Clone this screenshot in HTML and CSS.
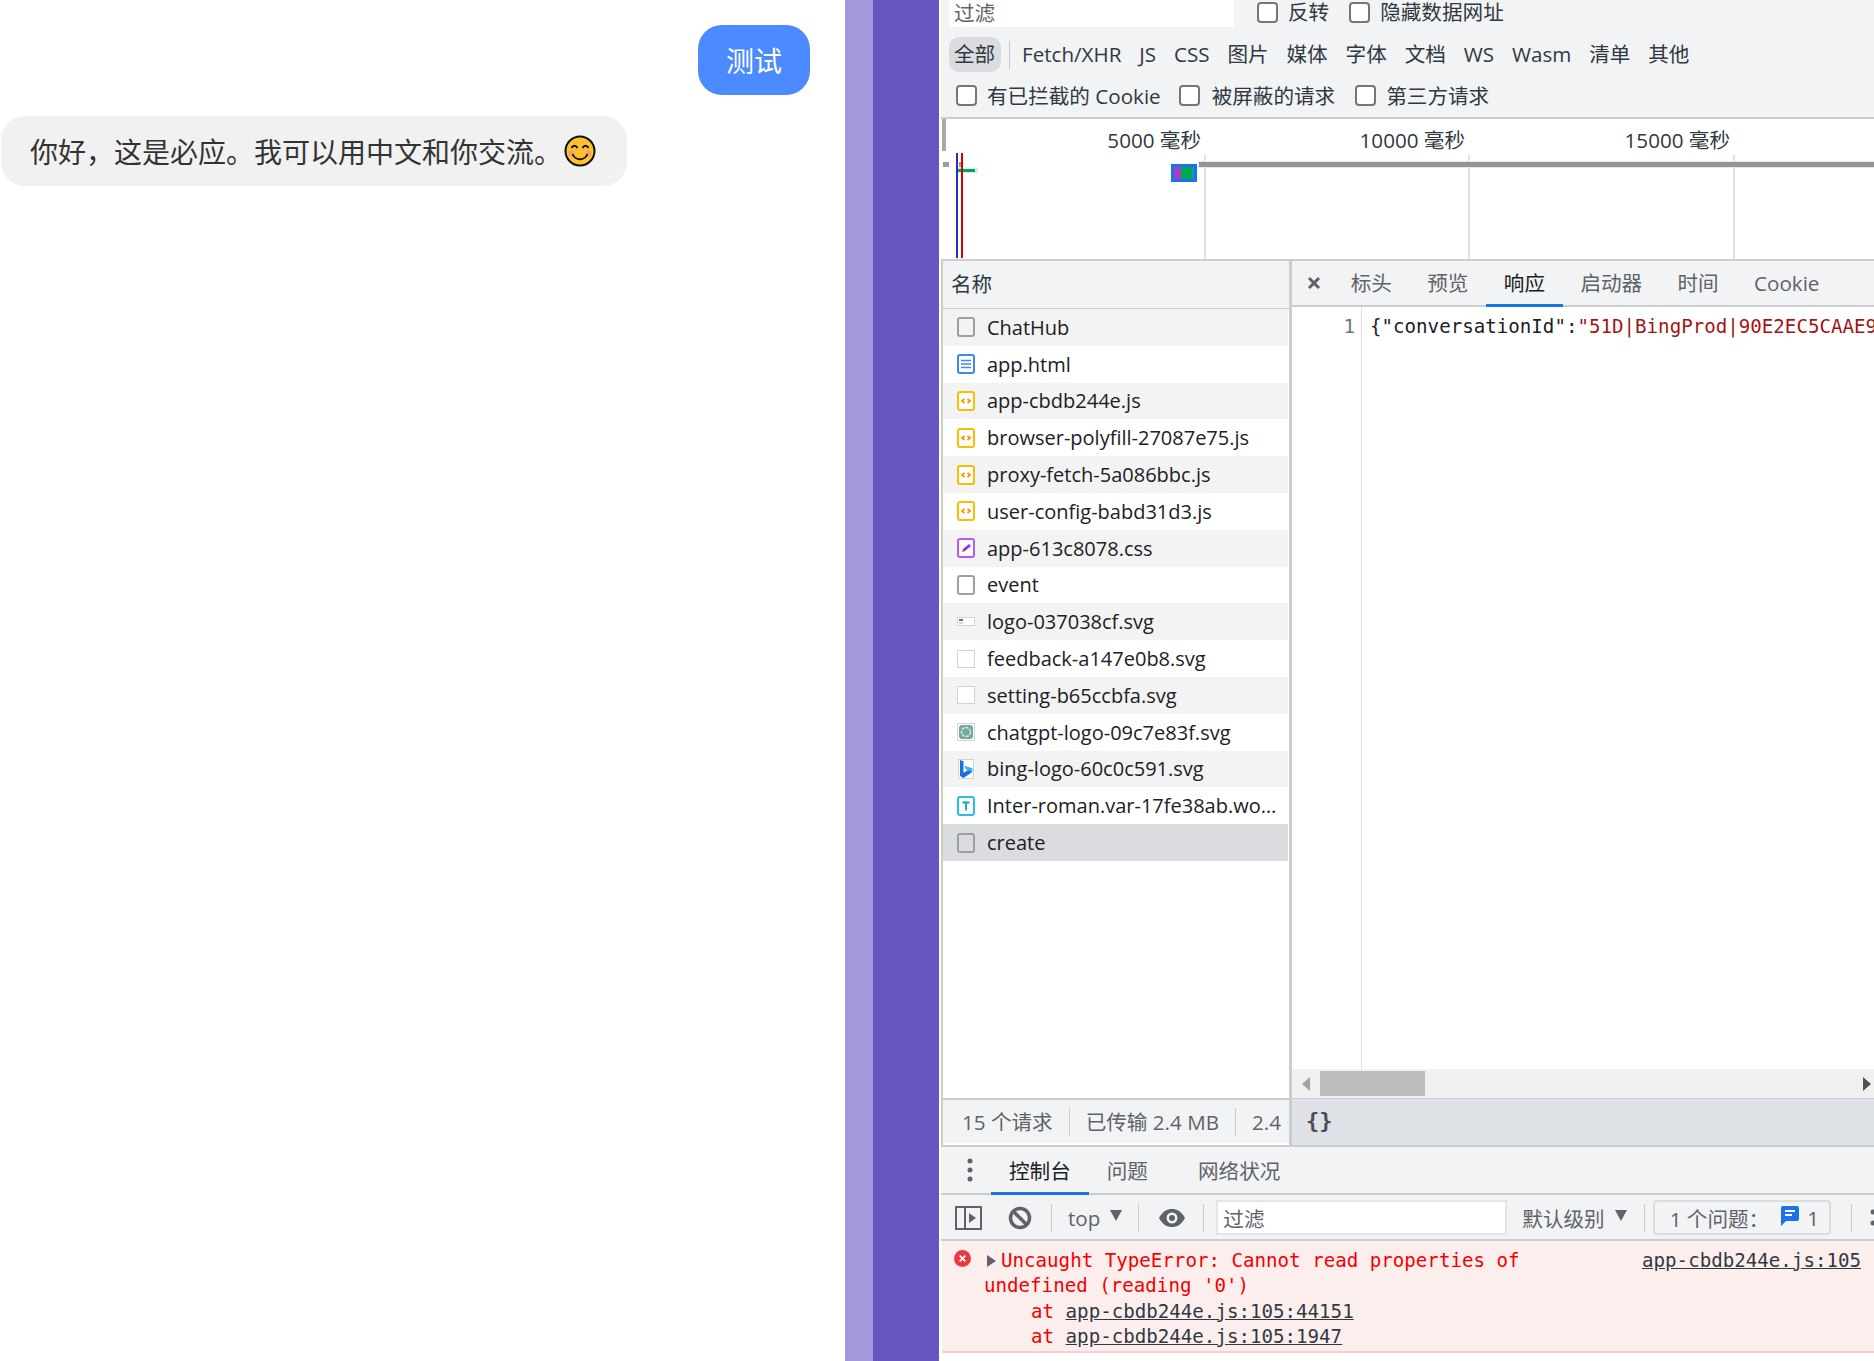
FILE: index.html
```html
<!DOCTYPE html>
<html lang="zh-CN">
<head>
<meta charset="utf-8">
<title>ChatHub DevTools</title>
<link rel="stylesheet" href="styles.css">
</head>
<body>
<svg class="defs" aria-hidden="true">
  <symbol id="i-doc" viewBox="0 0 18 20"><rect x="1" y="1" width="16" height="18" rx="2" fill="none" stroke="#9aa0a6" stroke-width="2"/></symbol>
  <symbol id="i-html" viewBox="0 0 18 20"><rect x="1" y="1" width="16" height="18" rx="2" fill="#fff" stroke="#4285f4" stroke-width="2"/><path d="M4 6.500h10M4 10h10M4 13.500h10" stroke="#4285f4" stroke-width="1.500"/></symbol>
  <symbol id="i-js" viewBox="0 0 18 20"><rect x="1" y="1" width="16" height="18" rx="2" fill="#fff" stroke="#fbbc04" stroke-width="2"/><path d="M7.500 8l-2.500 2 2.500 2M10.500 8l2.500 2-2.500 2" fill="none" stroke="#f29900" stroke-width="1.800"/></symbol>
  <symbol id="i-css" viewBox="0 0 18 20"><rect x="1" y="1" width="16" height="18" rx="2" fill="#fff" stroke="#af5cf7" stroke-width="2"/><path d="M5 14l1-3 6-5 2 2-6 5z" fill="#9334e6"/></symbol>
  <symbol id="i-font" viewBox="0 0 18 20"><rect x="1" y="1" width="16" height="18" rx="2" fill="#fff" stroke="#24c1e0" stroke-width="2"/><path d="M5.500 6.500h7M9 6.500v8" fill="none" stroke="#12a4c4" stroke-width="1.800"/></symbol>
  <symbol id="i-blank" viewBox="0 0 18 20"><rect x=".5" y="1.500" width="17" height="17" fill="#fff" stroke="#d0d3d8"/></symbol>
  <symbol id="i-logo" viewBox="0 0 18 20"><rect x=".5" y="5.500" width="17" height="8" fill="#fff" stroke="#d0d3d8"/><rect x="2" y="7" width="2" height="2" fill="#5c5fd6"/><rect x="4" y="7" width="2" height="2" fill="#5c5fd6"/><rect x="2" y="10" width="4" height="2" fill="#f5d77e"/></symbol>
  <symbol id="i-gpt" viewBox="0 0 18 20"><rect x=".5" y="1.500" width="17" height="17" fill="#fff" stroke="#d0d3d8"/><rect x="2" y="3" width="14" height="14" rx="3" fill="#74aa9c"/><circle cx="9" cy="10" r="4.500" fill="none" stroke="#d6e8e2" stroke-width="1.500" stroke-dasharray="3 1"/></symbol>
  <symbol id="i-bing" viewBox="0 0 18 20"><rect x="1.500" y=".5" width="15" height="19" fill="#fff" stroke="#d0d3d8"/><path d="M3 1l3.500 1.300v11.500l4.500-2.600-2-1-1.300-3.200 7.300 2.600v3.600L6.500 19 3 17z" fill="#1b6fe0"/><path d="M7.700 7l7.800 2.600v3.600L11 11.200 9 10.200z" fill="#37b6e8"/></symbol>
</svg>

<div class="screen">
  <main class="chat">
    <div class="bubble bubble-user">测试</div>
    <div class="bubble bubble-bot">你好，这是必应。我可以用中文和你交流。<svg class="emoji" viewBox="0 0 32 32"><circle cx="16" cy="16" r="14.500" fill="#fdc02f" stroke="#111" stroke-width="2"/><circle cx="7.500" cy="18.500" r="3" fill="#f2a06a"/><circle cx="24.500" cy="18.500" r="3" fill="#f2a06a"/><path d="M7.500 13c1.500-3 4.500-3 6 0M18.500 13c1.500-3 4.500-3 6 0" fill="none" stroke="#111" stroke-width="1.800"/><path d="M8.500 19c3 7 12 7 15 0" fill="none" stroke="#111" stroke-width="1.800"/></svg></div>
  </main>
  <div class="strip-light"></div>
  <div class="strip-dark"></div>

  <section class="devtools">
    <div class="bar filter-bar">
      <div class="filter-input">过滤</div>
      <label class="check"><span class="box"></span>反转</label>
      <label class="check"><span class="box"></span>隐藏数据网址</label>
    </div>
    <div class="bar type-bar">
      <span class="type type-on">全部</span>
      <span class="type-sep"></span>
      <span class="type">Fetch/XHR</span>
      <span class="type">JS</span>
      <span class="type">CSS</span>
      <span class="type">图片</span>
      <span class="type">媒体</span>
      <span class="type">字体</span>
      <span class="type">文档</span>
      <span class="type">WS</span>
      <span class="type">Wasm</span>
      <span class="type">清单</span>
      <span class="type">其他</span>
    </div>
    <div class="bar check-bar">
      <label class="check"><span class="box"></span>有已拦截的 Cookie</label>
      <label class="check"><span class="box"></span>被屏蔽的请求</label>
      <label class="check"><span class="box"></span>第三方请求</label>
    </div>

    <div class="overview">
      <div class="tick tick-1"><span>5000 毫秒</span></div>
      <div class="tick tick-2"><span>10000 毫秒</span></div>
      <div class="tick tick-3"><span>15000 毫秒</span></div>
      <i class="mark m-handle"></i>
      <i class="mark m-stub"></i>
      <i class="mark m-dot"></i>
      <i class="mark m-long"></i>
      <i class="mark m-halo"></i>
      <i class="mark m-green"></i>
      <i class="mark m-blue"></i>
      <i class="mark m-red"></i>
      <div class="mark m-req"><i class="req-p"></i><i class="req-g"></i><i class="req-t"></i></div>
    </div>

    <div class="split">
      <div class="names">
        <div class="names-head">名称</div>
        <ul class="rows">
          <li class="row"><svg class="ico"><use href="#i-doc"/></svg><span class="fname">ChatHub</span></li>
          <li class="row"><svg class="ico"><use href="#i-html"/></svg><span class="fname">app.html</span></li>
          <li class="row"><svg class="ico"><use href="#i-js"/></svg><span class="fname">app-cbdb244e.js</span></li>
          <li class="row"><svg class="ico"><use href="#i-js"/></svg><span class="fname">browser-polyfill-27087e75.js</span></li>
          <li class="row"><svg class="ico"><use href="#i-js"/></svg><span class="fname">proxy-fetch-5a086bbc.js</span></li>
          <li class="row"><svg class="ico"><use href="#i-js"/></svg><span class="fname">user-config-babd31d3.js</span></li>
          <li class="row"><svg class="ico"><use href="#i-css"/></svg><span class="fname">app-613c8078.css</span></li>
          <li class="row"><svg class="ico"><use href="#i-doc"/></svg><span class="fname">event</span></li>
          <li class="row"><svg class="ico"><use href="#i-logo"/></svg><span class="fname">logo-037038cf.svg</span></li>
          <li class="row"><svg class="ico"><use href="#i-blank"/></svg><span class="fname">feedback-a147e0b8.svg</span></li>
          <li class="row"><svg class="ico"><use href="#i-blank"/></svg><span class="fname">setting-b65ccbfa.svg</span></li>
          <li class="row"><svg class="ico"><use href="#i-gpt"/></svg><span class="fname">chatgpt-logo-09c7e83f.svg</span></li>
          <li class="row"><svg class="ico"><use href="#i-bing"/></svg><span class="fname">bing-logo-60c0c591.svg</span></li>
          <li class="row"><svg class="ico"><use href="#i-font"/></svg><span class="fname">Inter-roman.var-17fe38ab.woff2</span></li>
          <li class="row row-on"><svg class="ico"><use href="#i-doc"/></svg><span class="fname">create</span></li>
        </ul>
        <div class="names-foot">
          <span class="stat">15 个请求</span>
          <span class="stat">已传输 2.4 MB</span>
          <span class="stat">2.4</span>
        </div>
      </div>
      <div class="detail">
        <div class="detail-tabs">
          <svg class="close" viewBox="0 0 14 14"><path d="M2 2l10 10M12 2L2 12" stroke="#5f6368" stroke-width="3"/></svg>
          <span class="dtab">标头</span>
          <span class="dtab">预览</span>
          <span class="dtab dtab-on">响应</span>
          <span class="dtab">启动器</span>
          <span class="dtab">时间</span>
          <span class="dtab">Cookie</span>
        </div>
        <div class="code">
          <div class="gutter">1</div>
          <div class="code-line">{"conversationId":<span class="str">"51D|BingProd|90E2EC5CAAE9B1F4C7D2</span></div>
        </div>
        <div class="hscroll">
          <svg class="arrow arrow-l" viewBox="0 0 8 14"><path d="M8 0v14L0 7z" fill="#a3a3a3"/></svg>
          <div class="thumb"></div>
          <svg class="arrow arrow-r" viewBox="0 0 8 14"><path d="M0 0v14l8-7z" fill="#505050"/></svg>
        </div>
        <div class="detail-foot">{}</div>
      </div>
    </div>

    <div class="console-tabs">
      <svg class="dots" viewBox="0 0 6 24"><circle cx="3" cy="3" r="2.500"/><circle cx="3" cy="12" r="2.500"/><circle cx="3" cy="21" r="2.500"/></svg>
      <span class="ctab ctab-on">控制台</span>
      <span class="ctab ctab-issues">问题</span>
      <span class="ctab">网络状况</span>
    </div>

    <div class="console-bar">
      <svg class="tool tool-side" viewBox="0 0 27 24"><rect x="1" y="1" width="25" height="22" fill="none" stroke="#5f6368" stroke-width="2"/><path d="M10 1v22" stroke="#5f6368" stroke-width="2"/><path d="M14 7v10l7-5z" fill="#5f6368"/></svg>
      <svg class="tool tool-block" viewBox="0 0 24 24"><circle cx="12" cy="12" r="9.500" fill="none" stroke="#5f6368" stroke-width="3.500"/><path d="M5 5l14 14" stroke="#5f6368" stroke-width="3.500"/></svg>
      <span class="csep"></span>
      <span class="ctx">top</span><i class="caret caret-top"></i>
      <span class="csep"></span>
      <svg class="tool tool-eye" viewBox="0 0 28 20"><path d="M1 10C5 3 9 1 14 1s9 2 13 9c-4 7-8 9-13 9S5 17 1 10z" fill="#5f6368"/><circle cx="14" cy="10" r="5.500" fill="#f1f3f4"/><circle cx="14" cy="10" r="3" fill="#5f6368"/></svg>
      <span class="csep"></span>
      <div class="console-filter">过滤</div>
      <span class="levels">默认级别</span><i class="caret caret-lvl"></i>
      <span class="csep"></span>
      <div class="issues">
        <span>1 个问题：</span>
        <svg class="issue-ico" viewBox="0 0 18 20"><path d="M2 0h14a2 2 0 0 1 2 2v11a2 2 0 0 1-2 2H5l-5 5V2a2 2 0 0 1 2-2z" fill="#1a73e8"/><path d="M4 5h10M4 9h7" stroke="#fff" stroke-width="2"/></svg>
        <span class="issue-num">1</span>
      </div>
      <span class="csep"></span>
      <svg class="gear" viewBox="0 0 8 24"><circle cx="7" cy="6" r="2.500" fill="#5f6368"/><circle cx="7" cy="17" r="2.500" fill="#5f6368"/></svg>
    </div>

    <div class="error">
      <svg class="err-ico" viewBox="0 0 18 18"><circle cx="9" cy="9" r="9" fill="#eb3941"/><path d="M6 6l6 6M12 6l-6 6" stroke="#fff" stroke-width="1.800"/></svg>
      <a class="src">app-cbdb244e.js:105</a>
      <div class="msg"><i class="tri"></i>Uncaught TypeError: Cannot read properties of<br>undefined (reading '0')<br><span class="at">at <a>app-cbdb244e.js:105:44151</a></span><br><span class="at">at <a>app-cbdb244e.js:105:1947</a></span></div>
    </div>
  </section>
</div>
</body>
</html>
```

FILE: styles.css
```css
* { box-sizing: border-box; }
html, body { margin: 0; padding: 0; background: #fff; }
body {
  font-family: "Open Sans", "Noto Sans CJK SC", sans-serif;
  font-size: 20.600px;
  color: #303942;
}
.defs { display: none; }
ul { list-style: none; margin: 0; padding: 0; }
i { display: block; font-style: normal; }

.screen { display: flex; width: 1874px; height: 1361px; overflow: hidden; }

/* chat */
.chat {
  width: 845px; flex: none;
  padding: 25px 35px 0 1px;
  display: flex; flex-direction: column; align-items: flex-start; gap: 21px;
  font-family: "Noto Sans CJK SC", sans-serif;
}
.bubble {
  height: 70px; padding: 0 28px; border-radius: 24px;
  display: flex; align-items: center;
  font-size: 28px;
}
.bubble-user { align-self: flex-end; background: #4b8aff; color: #fff; }
.bubble-bot { background: #f1f1f1; color: #333; width: 626px; padding: 0 24px 0 29px; }
.emoji { width: 32px; height: 32px; flex: none; margin-left: 2px; }
.strip-light { width: 28px; flex: none; background: #a498d8; }
.strip-dark { width: 66px; flex: none; background: #6755c0; margin-right: 2px; }

/* devtools */
.devtools {
  flex: 1; min-width: 0; display: flex; flex-direction: column;
  background: #fff; position: relative;
}
.bar { display: flex; flex: none; white-space: nowrap; background: #f1f3f4; }
.filter-bar { height: 32px; padding-left: 8px; align-items: flex-start; }
.filter-input {
  width: 285px; height: 27px; background: #fff; padding-left: 5px;
  line-height: 27px; color: #5f6368; margin-right: 23px;
}
.check { display: flex; align-items: center; color: #303942; line-height: 24px; }
.box {
  width: 21px; height: 21px; flex: none; border: 2px solid #767676; border-radius: 4px;
  background: #fff; margin-right: 10px;
}
.filter-bar .check { height: 24px; margin-right: 20px; }
.type-bar { height: 44px; padding: 5px 0 4px 8px; align-items: center; }
.type { padding: 0 4px; margin-right: 9.900px; height: 35px; line-height: 35px; border-radius: 10px; }
.type-on { background: #dadce0; margin-right: 8px; padding: 0 5px; width: 52px; }
.type-sep { width: 1px; height: 28px; background: #c6c9ce; margin-right: 8px; }
.check-bar { height: 41px; padding: 0 0 2px 15px; align-items: center; }
.check-bar .check { margin-right: 18px; }
.check-bar .check:nth-child(2) { margin-right: 20px; }
.check-bar .check:nth-child(2) .box { margin-right: 12px; }

.overview {
  height: 144px; flex: none; position: relative; background: #fff;
  border-top: 2px solid #cbcdd1; border-bottom: 2px solid #cbcdd1;
}
.tick {
  position: absolute; top: 0; bottom: 0; width: 2px; background: #e0e0e0;
  display: flex; justify-content: flex-end;
}
.tick span {
  flex: none; background: #fff; padding: 7px 5px 0 0; height: 36px; line-height: 28px;
  white-space: nowrap; color: #303942;
}
.tick-1 { left: 263px; }
.tick-2 { left: 527px; }
.tick-3 { left: 792px; }
.mark { position: absolute; }
.m-handle { left: 1px; top: 0; width: 4px; height: 32px; background: #aaa; }
.m-stub { left: 2px; top: 43px; width: 6px; height: 5px; background: #9c9c9c; }
.m-dot { left: 18px; top: 43px; width: 3px; height: 5px; background: #9c9c9c; }
.m-long { left: 258px; right: 0; top: 43px; height: 5px; background: #949494; box-shadow: 0 0 0 1px #e8e8e8; }
.m-halo { left: 17px; top: 49px; width: 20px; height: 5px; background: #cdeef8; }
.m-green { left: 17px; top: 50px; width: 17px; height: 3px; background: #00a84f; }
.m-blue { left: 15px; top: 34px; width: 2px; height: 105px; background: #2a2ab8; }
.m-red { left: 20px; top: 34px; width: 2px; height: 105px; background: #d80000; }
.m-req {
  left: 230px; top: 45px; width: 26px; height: 18px; background: #1a73e8;
  padding: 3px; display: flex; align-items: stretch;
}
.req-p { width: 7px; background: #a83cc8; }
.req-g { width: 11px; background: #00a84f; }
.req-t { width: 2px; background: #1a94b8; }

.split { height: 886px; flex: none; display: flex; border-bottom: 2px solid #cbcdd1; }
.names {
  width: 350px; flex: none; display: flex; flex-direction: column;
  border-left: 2px solid #cbcdd1; border-right: 2px solid #cbcdd1; background: #fff;
}
.names-head {
  height: 48px; flex: none; background: #f1f3f4; border-bottom: 1px solid #cbcdd1;
  line-height: 47px; padding-left: 8px;
}
.rows { flex: 1; min-height: 0; }
.row {
  height: 36.800px; display: flex; align-items: center; padding: 0 5px 0 14px;
  font-size: 20px; margin-right: 1px;
}
.row:nth-child(odd) { background: #f3f3f3; }
.row.row-on { background: #dadce0; }
.ico { width: 18px; height: 20px; flex: none; margin-right: 12px; }
.fname { overflow: hidden; white-space: nowrap; text-overflow: ellipsis; color: #202124; }
.names-foot {
  height: 47px; flex: none; display: flex; align-items: center;
  background: #f1f3f4; border-top: 2px solid #cbcdd1; padding-left: 19px;
  color: #5f6368; white-space: nowrap; overflow: hidden; border-bottom: 2px solid #fff;
}
.stat { padding-right: 16px; margin-right: 16px; border-right: 1px solid #cbcdd1; height: 28px; line-height: 28px; flex: none; }
.stat:last-child { border: 0; margin: 0; padding: 0; }

.detail { flex: 1; min-width: 0; display: flex; flex-direction: column; background: #fff; border-left: 1px solid #cbcdd1; }
.detail-tabs {
  height: 46px; flex: none; display: flex; align-items: center; background: #f1f3f4;
  border-bottom: 2px solid #cbcdd1; color: #5f6368; padding-left: 15px; white-space: nowrap;
}
.close { width: 14px; height: 14px; margin-right: 12px; flex: none; }
.dtab { height: 46px; line-height: 44px; padding: 0 17.700px; align-self: flex-start; flex: none; }
.dtab-on { color: #202124; border-bottom: 3px solid #1a73e8; }
.code { flex: 1; min-height: 0; display: flex; font-family: "DejaVu Sans Mono", monospace; font-size: 19.150px; overflow: hidden; }
.gutter {
  width: 70px; flex: none; text-align: right; padding: 8px 6px 0 0; border-right: 1px solid #ddd;
  color: #6a7580; line-height: 24px;
}
.code-line { padding: 8px 0 0 8px; line-height: 24px; white-space: nowrap; color: #202124; }
.str { color: #a31515; }
.hscroll { height: 29px; flex: none; background: #f1f1f1; display: flex; align-items: center; padding-left: 10px; }
.arrow { width: 8px; height: 14px; flex: none; }
.arrow-r { margin-left: 438px; }
.thumb { width: 105px; height: 25px; background: #bdbdbd; margin-left: 10px; flex: none; }
.detail-foot {
  height: 47px; flex: none; background: #dee1e6; border-top: 1px solid #cbcdd1;
  padding-left: 14px; line-height: 44px; font-weight: 700; font-size: 22px; color: #4a4f55; font-family: "DejaVu Sans Mono", monospace;
}

.console-tabs {
  height: 48px; flex: none; display: flex; align-items: center; position: relative; background: #f1f3f4;
  border-bottom: 2px solid #cbcdd1; padding-left: 26px; color: #5f6368;
}
.dots { width: 6px; height: 24px; fill: #5f6368; margin-right: 18px; flex: none; }
.ctab { height: 48px; line-height: 49px; padding: 0 18px; align-self: flex-start; flex: none; }
.ctab-on { color: #202124; border-bottom: 3px solid #1a73e8; }
.ctab-issues { margin-right: 14px; }

.console-bar {
  height: 46px; flex: none; display: flex; align-items: center; white-space: nowrap; background: #f1f3f4;
  border-bottom: 2px solid #cbcdd1; padding: 1px 0 0 14px; color: #5f6368;
}
.tool { flex: none; }
.tool-side { width: 27px; height: 24px; margin-right: 26px; }
.tool-block { width: 24px; height: 24px; margin-right: 19px; }
.csep { width: 1px; height: 28px; background: #cbcdd1; flex: none; }
.ctx { margin: 0 10px 0 16px; }
.caret {
  width: 0; height: 0; flex: none; border-left: 6px solid transparent; border-right: 6px solid transparent;
  border-top: 11px solid #5f6368; margin-top: -4px;
}
.caret-top { margin-right: 16px; }
.tool-eye { width: 28px; height: 20px; margin: 0 17px 0 19px; }
.console-filter {
  width: 291px; height: 35px; background: #fff; border: 2px solid #e4e5e8; margin-left: 12px;
  line-height: 34px; padding-left: 5px; color: #5f6368; flex: none;
}
.levels { margin: 0 10px 0 15px; }
.caret-lvl { margin-right: 17px; }
.issues {
  width: 178px; height: 35px; flex: none; border: 2px solid #dadce0; border-radius: 4px; margin-left: 8px;
  display: flex; align-items: center; padding-left: 15px; margin-right: 20px;
}
.issue-ico { width: 18px; height: 20px; flex: none; margin-left: 12px; margin-top: -4px; }
.issue-num { margin-left: 8px; }
.gear { width: 8px; height: 24px; flex: none; margin-left: 14px; }

.error {
  height: 112px; flex: none; background: #fdeeee; border-bottom: 2px solid #f8cfcf; position: relative;
  font-family: "DejaVu Sans Mono", monospace; font-size: 19.150px; line-height: 25.300px;
  color: #f40000; padding: 7px 13px 0 42px; margin-left: 1px;
}
.err-ico { position: absolute; left: 12px; top: 9px; width: 17px; height: 17px; }
.src { float: right; color: #303942; text-decoration: underline; }
.msg { white-space: nowrap; }
.tri {
  display: inline-block; width: 0; height: 0; border-top: 6px solid transparent; border-bottom: 6px solid transparent;
  border-left: 9px solid #5f6368; margin: 0 5px 0 3px;
}
.at { padding-left: 47px; }
.at a { color: #303942; text-decoration: underline; }
```
